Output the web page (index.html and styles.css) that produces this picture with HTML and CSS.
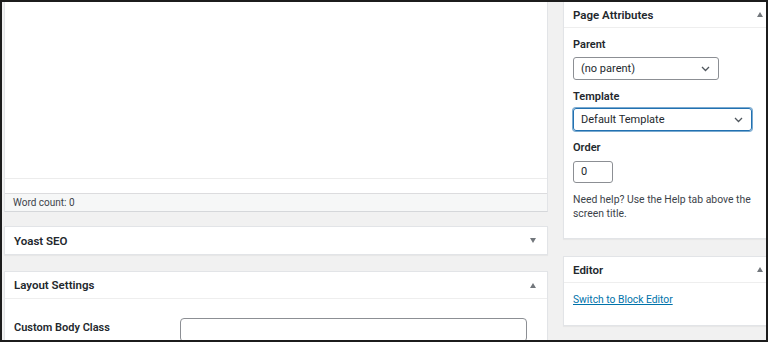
FILE: index.html
```html
<!DOCTYPE html>
<html lang="en">
<head>
    <meta charset="UTF-8">
    <meta name="viewport" content="width=device-width, initial-scale=1.0">
    <title>Edit Page</title>
    <link rel="stylesheet" href="styles.css">
</head>
<body>
    <div class="screen">
        <div class="main-col">
            <div class="editor">
                <div class="editor-area"></div>
                <div class="editor-gap"></div>
                <div class="status-bar">Word count: 0</div>
            </div>

            <div class="postbox postbox-yoast">
                <div class="postbox-header">
                    <h2>Yoast SEO</h2>
                    <span class="toggle toggle-down"></span>
                </div>
            </div>

            <div class="postbox postbox-layout">
                <div class="postbox-header">
                    <h2>Layout Settings</h2>
                    <span class="toggle"></span>
                </div>
                <div class="inside">
                    <div class="field-row">
                        <label for="bodyClass">Custom Body Class</label>
                        <input type="text" id="bodyClass" class="text-input">
                    </div>
                </div>
            </div>
        </div>

        <div class="side-col">
            <div class="postbox postbox-attributes">
                <div class="postbox-header">
                    <h2>Page Attributes</h2>
                    <span class="toggle"></span>
                </div>
                <div class="inside">
                    <p class="attr-label">Parent</p>
                    <div class="select select-parent">
                        <span>(no parent)</span>
                        <svg width="9" height="6" viewBox="0 0 9 6"><path d="M1 1l3.5 3.5L8 1" fill="none" stroke="#50575e" stroke-width="1.3"/></svg>
                    </div>

                    <p class="attr-label label-template">Template</p>
                    <div class="select select-template">
                        <span>Default Template</span>
                        <svg width="9" height="6" viewBox="0 0 9 6"><path d="M1 1l3.5 3.5L8 1" fill="none" stroke="#50575e" stroke-width="1.3"/></svg>
                    </div>

                    <p class="attr-label">Order</p>
                    <div class="order-input">0</div>

                    <p class="help">Need help? Use the Help tab above the screen title.</p>
                </div>
            </div>

            <div class="postbox postbox-editor">
                <div class="postbox-header">
                    <h2>Editor</h2>
                    <span class="toggle"></span>
                </div>
                <div class="inside">
                    <a href="#" class="switch-link">Switch to Block Editor</a>
                </div>
            </div>
        </div>
    </div>
</body>
</html>
```

FILE: styles.css
```css
:root {
    --bg: #f1f1f1;
    --box-border: #e2e4e7;
    --text: #23282d;
    --link: #0073aa;
    --input-border: #8c8f94;
    --focus: #2271b1;
}

* {
    box-sizing: border-box;
    margin: 0;
    padding: 0;
}

body {
    font-family: Roboto, "Liberation Sans", sans-serif;
    font-size: 10.5px;
    color: var(--text);
    background: #fff;
}

.screen {
    width: 768px;
    height: 342px;
    border: 2px solid #1c1c1c;
    background: var(--bg);
    padding-left: 2px;
    display: flex;
    overflow: hidden;
}

.main-col {
    width: 544px;
    flex-shrink: 0;
}

.side-col {
    width: 212px;
    flex-shrink: 0;
    margin-left: 15px;
}

/* classic editor */
.editor {
    background: #fff;
    border: 1px solid var(--box-border);
    border-top: 0;
    border-bottom-color: #d5d7da;
}

.editor-area {
    height: 177px;
    border-bottom: 1px solid #ececec;
}

.editor-gap {
    height: 14px;
}

.status-bar {
    height: 18px;
    line-height: 17px;
    padding-left: 8px;
    background: #f6f7f7;
    border-top: 1px solid #dcdcde;
    color: #3c434a;
    font-size: 10px;
}

/* meta boxes */
.postbox {
    background: #fff;
    border: 1px solid var(--box-border);
    box-shadow: 0 1px 1px rgba(0, 0, 0, 0.04);
}

.postbox-header {
    height: 27px;
    display: flex;
    align-items: center;
    justify-content: space-between;
    padding: 0 9px;
}

.postbox-header h2 {
    font-size: 11.5px;
    font-weight: 600;
}

.toggle {
    width: 0;
    height: 0;
    border-left: 3.5px solid transparent;
    border-right: 3.5px solid transparent;
    border-bottom: 5px solid #72777c;
    margin-right: 2px;
}

.toggle-down {
    border-bottom: 0;
    border-top: 5px solid #72777c;
}

.postbox-yoast {
    margin-top: 14px;
}

.postbox-layout {
    margin-top: 16px;
    height: 80px;
}

.postbox-layout .postbox-header,
.postbox-attributes .postbox-header,
.postbox-editor .postbox-header {
    border-bottom: 1px solid #eee;
}

.postbox-layout .inside {
    padding: 19px 20px 0 9px;
}

.field-row {
    display: flex;
    align-items: flex-start;
}

.field-row label {
    width: 166px;
    font-weight: 600;
    font-size: 11px;
    margin-top: 3px;
}

.text-input {
    width: 347px;
    height: 24px;
    border: 1px solid var(--input-border);
    border-radius: 4px;
}

/* side boxes */
.postbox-attributes {
    border-top: 0;
    height: 237px;
}

.postbox-attributes .postbox-header {
    height: 26px;
}

.postbox-attributes .inside {
    padding: 10px 9px 0;
}

.attr-label {
    font-weight: 600;
    font-size: 11px;
    height: 14px;
    line-height: 14px;
    margin-bottom: 6px;
}

.attr-label:first-child {
    margin-bottom: 5px;
}

.label-template {
    margin-bottom: 4px;
}

.select {
    display: flex;
    align-items: center;
    justify-content: space-between;
    height: 23px;
    padding: 0 8px 0 7px;
    border: 1px solid var(--input-border);
    border-radius: 3px;
    margin-bottom: 10px;
    font-size: 11px;
}

.select-parent {
    width: 146px;
}

.select-template {
    width: 179px;
    border-color: var(--focus);
    box-shadow: 0 0 0 1px rgba(34, 113, 177, 0.6);
}

.order-input {
    width: 40px;
    height: 22px;
    line-height: 20px;
    padding-left: 7px;
    border: 1px solid var(--input-border);
    border-radius: 3px;
    margin-bottom: 10px;
    font-size: 11px;
}

.help {
    line-height: 14px;
    color: #3c434a;
    font-size: 10.4px;
}

.postbox-editor {
    margin-top: 17px;
    height: 70px;
}

.postbox-editor .postbox-header {
    height: 26px;
}

.postbox-editor .inside {
    padding: 10px 9px 0;
}

.switch-link {
    color: var(--link);
    text-decoration: underline;
    font-size: 10.3px;
}
```
